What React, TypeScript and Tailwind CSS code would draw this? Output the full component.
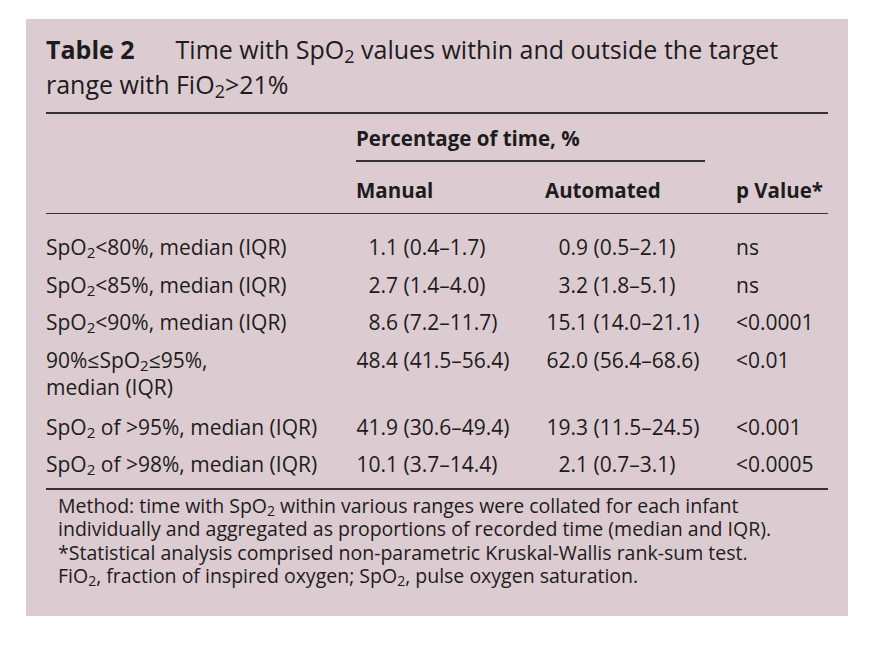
import React from "react";

const S = ({ children }: { children: React.ReactNode }) => (
  <sub className="text-[0.72em] leading-none relative bottom-[-0.22em] align-baseline">{children}</sub>
);

type Row = {
  label: React.ReactNode;
  m1: string;
  m2: string;
  a1: string;
  a2: string;
  p: string;
  tall?: boolean;
};

const rows: Row[] = [
  { label: <>SpO<S>2</S>&lt;80%, median (IQR)</>, m1: "1.1", m2: "(0.4–1.7)", a1: "0.9", a2: "(0.5–2.1)", p: "ns" },
  { label: <>SpO<S>2</S>&lt;85%, median (IQR)</>, m1: "2.7", m2: "(1.4–4.0)", a1: "3.2", a2: "(1.8–5.1)", p: "ns" },
  { label: <>SpO<S>2</S>&lt;90%, median (IQR)</>, m1: "8.6", m2: "(7.2–11.7)", a1: "15.1", a2: "(14.0–21.1)", p: "<0.0001" },
  {
    label: (
      <>
        90%≤SpO<S>2</S>≤95%,
        <br />
        median (IQR)
      </>
    ),
    m1: "48.4",
    m2: "(41.5–56.4)",
    a1: "62.0",
    a2: "(56.4–68.6)",
    p: "<0.01",
    tall: true,
  },
  { label: <>SpO<S>2</S> of &gt;95%, median (IQR)</>, m1: "41.9", m2: "(30.6–49.4)", a1: "19.3", a2: "(11.5–24.5)", p: "<0.001" },
  { label: <>SpO<S>2</S> of &gt;98%, median (IQR)</>, m1: "10.1", m2: "(3.7–14.4)", a1: "2.1", a2: "(0.7–3.1)", p: "<0.0005" },
];

export default function App() {
  return (
    <div className="w-[872px] h-[660px] bg-white pt-[19px] pl-[26px] font-['Open_Sans',sans-serif] text-[#1c1c1c]">
      <div className="w-[822px] h-[597px] bg-[#dccbd0] px-[20px] pt-[13px]">
        {/* Title */}
        <div className="text-[25px] leading-[35px] whitespace-nowrap">
          <span className="font-bold">Table 2</span>
          <span className="inline-block w-[41px]" />
          Time with SpO<S>2</S> values within and outside the target
          <br />
          range with FiO<S>2</S>&gt;21%
        </div>
        <div className="mt-[10px] h-[2px] bg-[#333]" />

        {/* Header */}
        <div className="grid grid-cols-[310px_189px_191px_92px] pt-[10px] text-[20.5px] leading-[28px] font-bold">
          <div />
          <div className="col-span-2 pr-[31px]">
            <div>Percentage of time, %</div>
            <div className="mt-[8px] h-[1.5px] bg-[#333]" />
          </div>
          <div />
          <div className="pt-[14px]" />
          <div className="pt-[14px]">Manual</div>
          <div className="pt-[14px]">Automated</div>
          <div className="pt-[14px] whitespace-nowrap">p Value*</div>
        </div>
        <div className="mt-[9px] h-[1.5px] bg-[#333]" />

        {/* Body */}
        <div className="pt-[15px] pb-[4px] text-[21px] leading-[27.5px]">
          {rows.map((r, i) => (
            <div
              key={i}
              className={`grid grid-cols-[310px_189px_191px_92px] pt-[5px] ${r.tall ? "pb-[7px]" : "pb-[5px]"}`}
            >
              <div className="whitespace-nowrap">{r.label}</div>
              <div className="whitespace-nowrap">
                <span className="inline-block w-[42px] text-right">{r.m1}</span> {r.m2}
              </div>
              <div className="whitespace-nowrap">
                <span className="inline-block w-[43px] text-right">{r.a1}</span> {r.a2}
              </div>
              <div className="whitespace-nowrap">{r.p}</div>
            </div>
          ))}
        </div>
        <div className="h-[2px] bg-[#333]" />

        {/* Footer */}
        <div className="pl-[12px] pt-[4px] text-[19.5px] leading-[23.5px] whitespace-nowrap">
          Method: time with SpO<S>2</S> within various ranges were collated for each infant
          <br />
          individually and aggregated as proportions of recorded time (median and IQR).
          <br />
          *Statistical analysis comprised non-parametric Kruskal-Wallis rank-sum test.
          <br />
          FiO<S>2</S>, fraction of inspired oxygen; SpO<S>2</S>, pulse oxygen saturation.
        </div>
      </div>
    </div>
  );
}
